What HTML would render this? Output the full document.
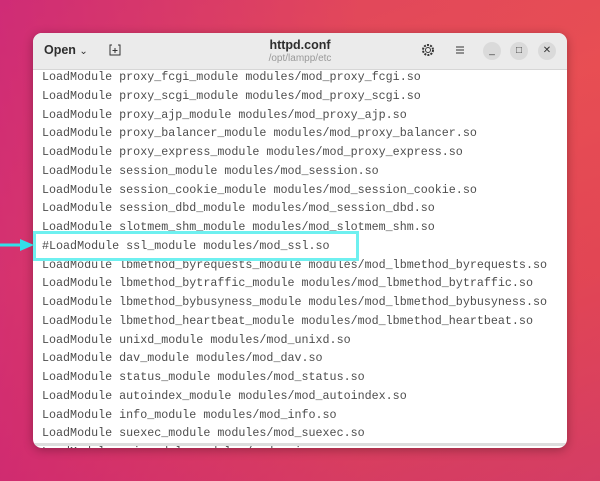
<!DOCTYPE html>
<html><head><style>
body{margin:0;width:600px;height:481px;overflow:hidden;position:relative;
background:linear-gradient(160deg,#d63a6a 0%,#e2465c 40%,#d8385e 70%,#c22a78 100%);font-family:"Liberation Sans",sans-serif}
.bg2{position:absolute;inset:0;background:linear-gradient(90deg,rgba(200,30,130,.5),rgba(240,90,70,.3) 60%,rgba(240,90,70,.4))}
.win{position:absolute;left:33px;top:33px;width:534px;height:415px;background:#fff;border-radius:9px;overflow:hidden;box-shadow:0 2px 10px rgba(0,0,0,.3)}
.hdr{height:36px;background:#ebebeb;border-bottom:1px solid #d6d6d6;position:relative}
.t{position:absolute;left:0;right:0;text-align:center;top:5px;font-size:12.5px;font-weight:bold;color:#2e2e2e}
.s{position:absolute;left:0;right:0;text-align:center;top:20px;font-size:10px;color:#999}
.open{position:absolute;left:11px;top:10px;font-size:12.5px;font-weight:bold;color:#2e2e2e}
.btn{position:absolute;top:9px;width:18px;height:18px;border-radius:50%;background:#dadada;font-size:10px;text-align:center;line-height:18px;color:#333}
.code{position:absolute;left:9px;top:35px;font-family:"Liberation Mono",monospace;font-size:11.7px;color:#4d4d4d;line-height:18.75px;white-space:pre}
.hl{position:absolute;left:33px;top:231px;width:320px;height:24px;border:3px solid #6ef0f0}
</style></head><body><div class="bg2"></div>
<div class="win">
<div class="hdr">
<div class="open">Open <span style="font-weight:normal;font-size:10px">&#8964;</span></div>
<svg style="position:absolute;left:76px;top:11px" width="12" height="12"><path d="M3 1H1V11H11V1H9M6 4V9M3.5 6.5H8.5" stroke="#333" fill="none" stroke-width="1"/></svg>
<div class="t">httpd.conf</div><div class="s">/opt/lampp/etc</div>
<svg style="position:absolute;left:388px;top:10px" width="14" height="14"><circle cx="7" cy="7" r="5" stroke="#333" stroke-width="2" fill="none" stroke-dasharray="2 1.2"/><circle cx="7" cy="7" r="2.5" stroke="#333" fill="none"/></svg>
<svg style="position:absolute;left:422px;top:12px" width="10" height="10"><path d="M1 2H9M1 5H9M1 8H9" stroke="#333"/></svg>
<div class="btn" style="left:450px">_</div><div class="btn" style="left:477px">&#9633;</div><div class="btn" style="left:505px">&#10005;</div>
</div>
<div class="code">LoadModule proxy_fcgi_module modules/mod_proxy_fcgi.so
LoadModule proxy_scgi_module modules/mod_proxy_scgi.so
LoadModule proxy_ajp_module modules/mod_proxy_ajp.so
LoadModule proxy_balancer_module modules/mod_proxy_balancer.so
LoadModule proxy_express_module modules/mod_proxy_express.so
LoadModule session_module modules/mod_session.so
LoadModule session_cookie_module modules/mod_session_cookie.so
LoadModule session_dbd_module modules/mod_session_dbd.so
LoadModule slotmem_shm_module modules/mod_slotmem_shm.so
#LoadModule ssl_module modules/mod_ssl.so
LoadModule lbmethod_byrequests_module modules/mod_lbmethod_byrequests.so
LoadModule lbmethod_bytraffic_module modules/mod_lbmethod_bytraffic.so
LoadModule lbmethod_bybusyness_module modules/mod_lbmethod_bybusyness.so
LoadModule lbmethod_heartbeat_module modules/mod_lbmethod_heartbeat.so
LoadModule unixd_module modules/mod_unixd.so
LoadModule dav_module modules/mod_dav.so
LoadModule status_module modules/mod_status.so
LoadModule autoindex_module modules/mod_autoindex.so
LoadModule info_module modules/mod_info.so
LoadModule suexec_module modules/mod_suexec.so
LoadModule cgi_module modules/mod_cgi.so</div>
<div style="position:absolute;left:0;right:0;top:410px;height:3px;background:#ddd"></div>
</div>
<div class="hl"></div>
<svg style="position:absolute;left:0;top:237px" width="36" height="16"><path d="M0 8H22" stroke="#33e0e8" stroke-width="3"/><path d="M20 2L34 8L20 14Z" fill="#33e0e8"/></svg>
</body></html>
